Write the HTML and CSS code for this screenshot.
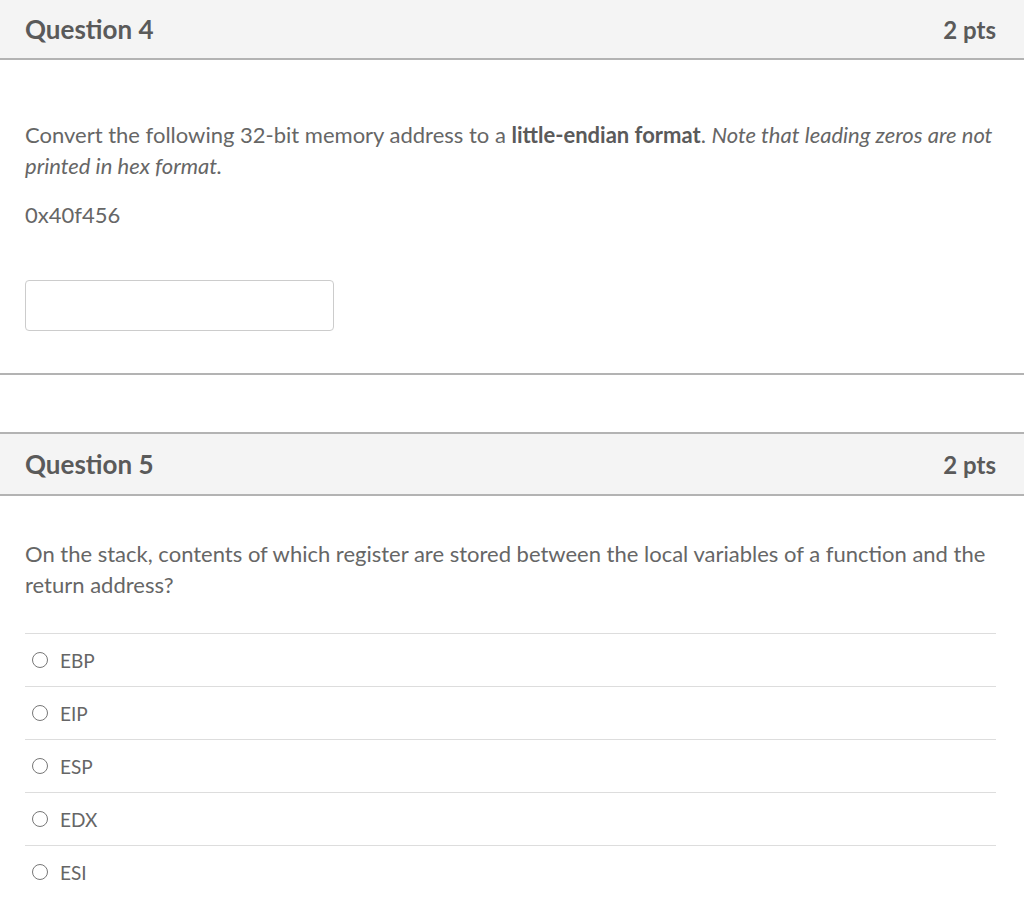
FILE: index.html
```html
<!DOCTYPE html>
<html lang="en">
<head>
  <meta charset="UTF-8" />
  <title>Quiz</title>
  <link rel="stylesheet" href="styles.css">
</head>
<body>
  <div class="question first">
    <div class="header">
      <span class="title">Question 4</span>
      <span class="pts">2 pts</span>
    </div>
    <div class="content">
      <p class="text">Convert the following 32-bit memory address to a <b>little-endian format</b>. <i>Note that leading zeros are not printed in hex format.</i></p>
      <p class="value">0x40f456</p>
      <input class="answer-box" type="text" />
    </div>
  </div>

  <div class="question">
    <div class="header">
      <span class="title">Question 5</span>
      <span class="pts">2 pts</span>
    </div>
    <div class="content choices">
      <p class="text">On the stack, contents of which register are stored between the local variables of a function and the return address?</p>
      <div class="answers">
        <label class="answer"><span class="radio"></span>EBP</label>
        <label class="answer"><span class="radio"></span>EIP</label>
        <label class="answer"><span class="radio"></span>ESP</label>
        <label class="answer"><span class="radio"></span>EDX</label>
        <label class="answer"><span class="radio"></span>ESI</label>
      </div>
    </div>
  </div>
</body>
</html>
```

FILE: styles.css
```css
body {
  margin: 0;
  background: #fff;
  color: #666;
  font-family: Lato, 'Open Sans', sans-serif;
}
.question {
  border-top: 2px solid #b3b3b3;
  border-bottom: 2px solid #b3b3b3;
  margin-top: 57px;
}
.question.first {
  border-top: none;
  margin-top: 0;
}
.header {
  display: flex;
  justify-content: space-between;
  align-items: center;
  height: 60px;
  padding: 0 28px 0 25px;
  background: #f4f4f4;
  border-bottom: 2px solid #b3b3b3;
  color: #5a5a5a;
  font-weight: bold;
}
.first .header {
  height: 58px;
}
.title {
  font-size: 26px;
}
.pts {
  font-size: 24px;
}
.content {
  padding: 59px 28px 42px 25px;
}
.content.choices {
  padding-top: 42px;
}
.text {
  margin: 0;
  font-size: 22px;
  line-height: 31px;
}
.text b {
  color: #5a5a5a;
}
.value {
  margin: 18px 0 0;
  font-size: 22px;
  line-height: 31px;
}
.answer-box {
  display: block;
  box-sizing: border-box;
  width: 309px;
  height: 51px;
  margin-top: 50px;
  border: 1px solid #ccc;
  border-radius: 4px;
}
.answers {
  margin-top: 33px;
}
.answer {
  display: flex;
  align-items: center;
  height: 52px;
  border-top: 1px solid #ddd;
  font-size: 19px;
  color: #666;
}
.radio {
  box-sizing: border-box;
  width: 16px;
  height: 16px;
  margin: 0 12px 0 7px;
  border: 1.5px solid #777;
  border-radius: 50%;
}
```
